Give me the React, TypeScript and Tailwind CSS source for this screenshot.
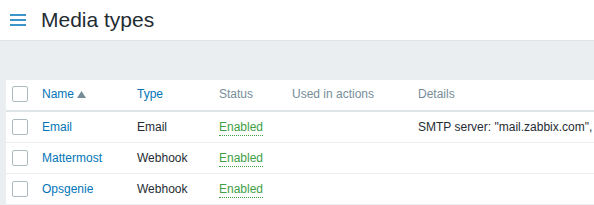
import React from 'react';

type MediaType = {
  name: string;
  type: string;
  details: string;
};

const mediaTypes: MediaType[] = [
  { name: 'Email', type: 'Email', details: 'SMTP server: "mail.zabbix.com", SMTP helo: "zabbix.com", email: "zabbix@company.com"' },
  { name: 'Mattermost', type: 'Webhook', details: '' },
  { name: 'Opsgenie', type: 'Webhook', details: '' },
];

const cols = 'grid grid-cols-[30px_95px_82px_73px_126px_1fr]';

const Checkbox: React.FC = () => (
  <span className="block w-4 h-4 rounded-[2px] border border-[#acbbc2] bg-white" />
);

const MenuIcon: React.FC = () => (
  <svg width="16" height="14" viewBox="0 0 16 14" className="block">
    <rect x="0" y="1" width="16" height="2" fill="#3d94c9" />
    <rect x="0" y="6" width="16" height="2" fill="#3d94c9" />
    <rect x="0" y="11" width="16" height="2" fill="#3d94c9" />
  </svg>
);

export default function App() {
  return (
    <div className="w-[594px] h-[205px] overflow-hidden bg-[#ebeef0] text-[12px] text-[#1f2c33]" style={{ fontFamily: '"Liberation Sans", Arial, sans-serif' }}>
      <header className="h-[41px] bg-white border-b border-[#dfe4e7] flex items-center">
        <div className="pl-[10px] pr-[15px] pb-[1px]">
          <MenuIcon />
        </div>
        <h1 className="text-[21px] leading-none text-[#1f2c33] pb-[1px]">Media types</h1>
      </header>

      <div className="pt-[39px] pl-[6px]">
        <div className="w-[760px] bg-white">
          <div className={`${cols} h-[32px] items-center border-b-2 border-[#dfe4e7] pb-[2px] text-[#768d99]`}>
            <div className="pl-[6px]"><Checkbox /></div>
            <div className="pl-[6px] flex items-center gap-[3px] text-[#0275b8]">
              Name
              <svg width="9" height="7" viewBox="0 0 9 7"><path d="M0 7 L4.5 0 L9 7 Z" fill="#768d99" /></svg>
            </div>
            <div className="pl-[6px] text-[#0275b8]">Type</div>
            <div className="pl-[6px]">Status</div>
            <div className="pl-[6px]">Used in actions</div>
            <div className="pl-[6px]">Details</div>
          </div>

          {mediaTypes.map(m => (
            <div key={m.name} className={`${cols} h-[31px] items-center border-b border-[#ebeef0]`}>
              <div className="pl-[6px]"><Checkbox /></div>
              <div className="pl-[6px] text-[#0275b8]">{m.name}</div>
              <div className="pl-[6px]">{m.type}</div>
              <div className="pl-[6px]">
                <span className="text-[#429e47] border-b border-dotted border-[#429e47] pb-[1px]">Enabled</span>
              </div>
              <div className="pl-[6px]" />
              <div className="pl-[6px] whitespace-nowrap">{m.details}</div>
            </div>
          ))}
        </div>
      </div>
    </div>
  );
}
